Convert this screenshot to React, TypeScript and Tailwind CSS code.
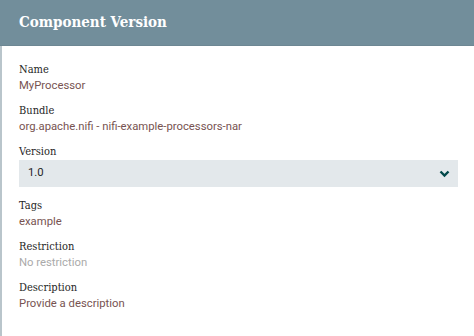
import React from "react";

const slab = { fontFamily: '"DejaVu Serif Condensed", "DejaVu Serif", "Liberation Serif", serif' };
const sans = { fontFamily: 'Roboto, "Liberation Sans", sans-serif' };

function Field({ label, value, muted }: { label: string; value: string; muted?: boolean }) {
  return (
    <div className="flex flex-col">
      <div className="h-4 leading-4 text-[11px] text-[#262626]" style={slab}>
        {label}
      </div>
      <div
        className={`h-4 leading-4 text-[11.3px] ${muted ? "text-[#aaaaaa]" : "text-[#775351]"}`}
        style={sans}
      >
        {value}
      </div>
    </div>
  );
}

export default function App() {
  return (
    <div className="w-[474px] h-[336px] bg-white flex flex-col overflow-hidden">
      <div className="h-[46px] shrink-0 bg-[#728e9b] flex items-center pl-[19px] border-b border-[#6d8793]">
        <span className="text-white font-bold text-[15px]" style={slab}>
          Component Version
        </span>
      </div>
      <div className="flex-1 border-l-2 border-[#b9c5cb] pl-[17px] pr-[16px] pt-[16px] flex flex-col gap-[9px]">
        <Field label="Name" value="MyProcessor" />
        <Field label="Bundle" value="org.apache.nifi - nifi-example-processors-nar" />
        <div className="flex flex-col">
          <div className="h-4 leading-4 text-[11px] text-[#262626]" style={slab}>
            Version
          </div>
          <div className="h-[27px] bg-[#e3e8eb] flex items-center justify-between pl-[9px] pr-[8px]">
            <span className="text-[11.3px] text-[#262626]" style={sans}>
              1.0
            </span>
            <svg width="11" height="8" viewBox="0 0 11 8">
              <path d="M1.5 1.5 L5.5 5.5 L9.5 1.5" fill="none" stroke="#004849" strokeWidth="2.4" />
            </svg>
          </div>
        </div>
        <div className="mt-[2px] flex flex-col gap-[9px]">
          <Field label="Tags" value="example" />
          <Field label="Restriction" value="No restriction" muted />
          <Field label="Description" value="Provide a description" />
        </div>
      </div>
    </div>
  );
}
